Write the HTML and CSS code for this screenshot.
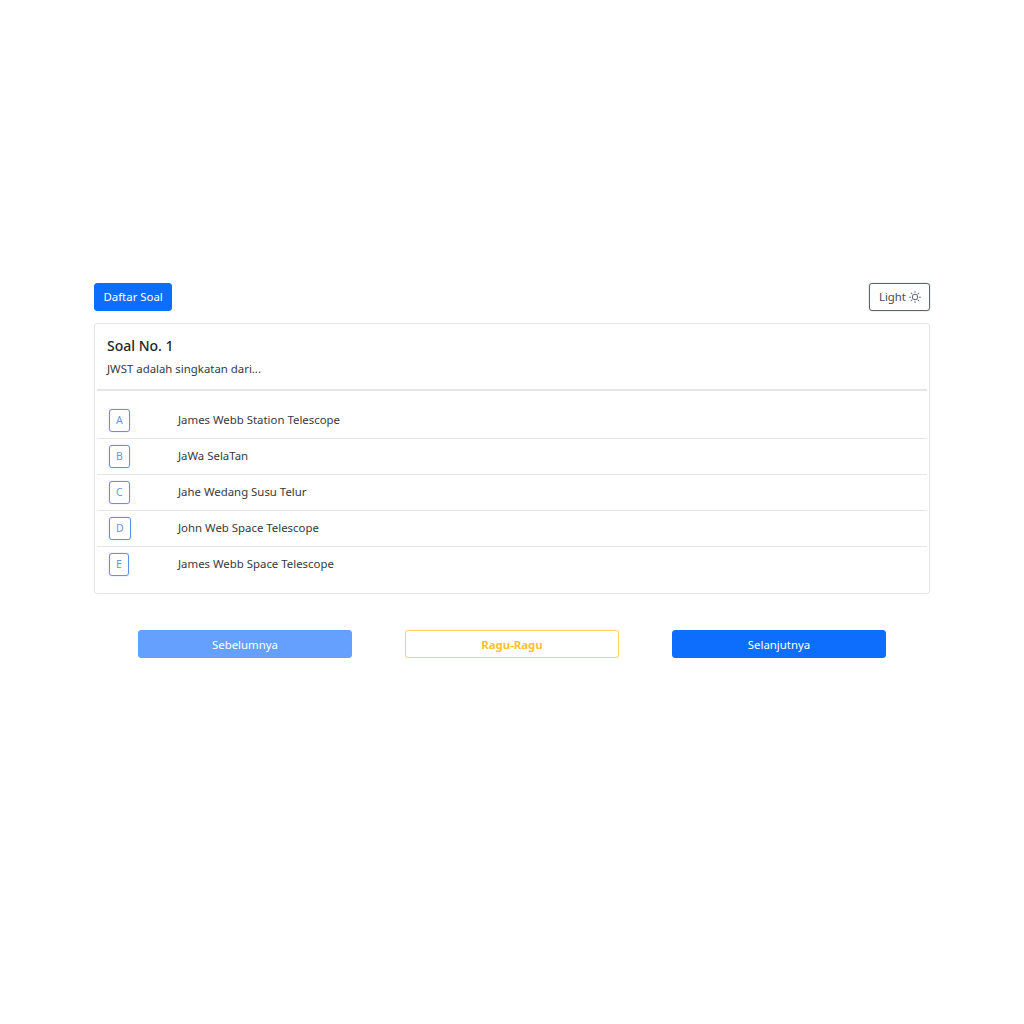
FILE: index.html
```html
<!DOCTYPE html>
<html lang="en">
<head>
<meta charset="UTF-8">
<meta name="viewport" content="width=device-width, initial-scale=1.0">
<title>Soal</title>
<link rel="stylesheet" href="styles.css">
</head>
<body>

<div class="container">
    <div class="top-bar">
        <button class="btn btn-primary">Daftar Soal</button>
        <button class="btn btn-theme">Light
            <svg class="sun" viewBox="0 0 16 16" width="12" height="12" fill="currentColor">
                <path d="M8 11a3 3 0 1 1 0-6 3 3 0 0 1 0 6zm0 1a4 4 0 1 0 0-8 4 4 0 0 0 0 8zM8 0a.5.5 0 0 1 .5.5v2a.5.5 0 0 1-1 0v-2A.5.5 0 0 1 8 0zm0 13a.5.5 0 0 1 .5.5v2a.5.5 0 0 1-1 0v-2A.5.5 0 0 1 8 13zm8-5a.5.5 0 0 1-.5.5h-2a.5.5 0 0 1 0-1h2a.5.5 0 0 1 .5.5zM3 8a.5.5 0 0 1-.5.5h-2a.5.5 0 0 1 0-1h2A.5.5 0 0 1 3 8zm10.657-5.657a.5.5 0 0 1 0 .707l-1.414 1.415a.5.5 0 1 1-.707-.708l1.414-1.414a.5.5 0 0 1 .707 0zm-9.193 9.193a.5.5 0 0 1 0 .707L3.05 13.657a.5.5 0 0 1-.707-.707l1.414-1.414a.5.5 0 0 1 .707 0zm9.193 2.121a.5.5 0 0 1-.707 0l-1.414-1.414a.5.5 0 0 1 .707-.707l1.414 1.414a.5.5 0 0 1 0 .707zM4.464 4.465a.5.5 0 0 1-.707 0L2.343 3.05a.5.5 0 1 1 .707-.707l1.414 1.414a.5.5 0 0 1 0 .708z"/>
            </svg>
        </button>
    </div>

    <div class="card">
        <div class="card-head">
            <h2>Soal No. 1</h2>
            <p>JWST adalah singkatan dari...</p>
        </div>
        <ul class="options">
            <li><span class="letter">A</span><span class="answer">James Webb Station Telescope</span></li>
            <li><span class="letter">B</span><span class="answer">JaWa SelaTan</span></li>
            <li><span class="letter">C</span><span class="answer">Jahe Wedang Susu Telur</span></li>
            <li><span class="letter">D</span><span class="answer">John Web Space Telescope</span></li>
            <li><span class="letter">E</span><span class="answer">James Webb Space Telescope</span></li>
        </ul>
    </div>

    <div class="bottom-bar">
        <button class="btn btn-primary btn-disabled">Sebelumnya</button>
        <button class="btn btn-warning">Ragu-Ragu</button>
        <button class="btn btn-primary">Selanjutnya</button>
    </div>
</div>

</body>
</html>
```

FILE: styles.css
```css
* {
    box-sizing: border-box;
}

body {
    font-family: "Noto Sans", "Open Sans", sans-serif;
    font-size: 11.4px;
    color: #212529;
    background-color: #fff;
    margin: 0;
    padding: 283px 94px 0;
}

.top-bar {
    display: flex;
    justify-content: space-between;
    margin-bottom: 12px;
}

.btn {
    font-family: inherit;
    font-size: 11.4px;
    line-height: 18px;
    height: 28px;
    padding: 0 8.5px;
    border: 1px solid transparent;
    border-radius: 3px;
    background: none;
}

.btn-primary {
    background-color: #0d6efd;
    border-color: #0d6efd;
    color: #fff;
}

.btn-disabled {
    background-color: #65a0fe;
    border-color: #65a0fe;
}

.btn-theme {
    display: flex;
    align-items: center;
    gap: 3px;
    padding: 0 8px 0 9px;
    border-color: #5c636a;
    box-shadow: 0 0 1px #5c636a;
    color: #444b52;
}

.btn-warning {
    border-color: #ffd466;
    box-shadow: 0 0 1px #ffd466;
    color: #ffc02e;
    font-weight: 700;
}

.bottom-bar .btn {
    padding-top: 2px;
}

.card {
    height: 271px;
    border: 1px solid #e3e5e7;
    border-radius: 3px;
    padding: 0 2px;
}

.card-head {
    height: 67px;
    padding: 12px 10px 0;
    border-bottom: 2px solid #e3e5e7;
}

.card-head h2 {
    margin: 0 0 4px;
    font-size: 14px;
    line-height: 20px;
    font-weight: 500;
}

.card-head p {
    margin: 0;
    line-height: 18px;
    color: #343a40;
}

.options {
    list-style: none;
    margin: 12px 0 0;
    padding: 0;
}

.options li {
    position: relative;
    display: flex;
    align-items: center;
    height: 36px;
    padding-left: 12px;
    border-bottom: 1px solid #e3e5e7;
}

.options li:last-child {
    border-bottom: none;
    height: 35px;
}

.letter {
    flex: none;
    height: 23px;
    padding: 0 6px;
    border: 1px solid #5b93ee;
    box-shadow: 0 0 1px #5b93ee;
    border-radius: 3px;
    font-size: 10.5px;
    line-height: 21px;
    text-align: center;
    color: #6c94d8;
}

.answer {
    position: absolute;
    left: 81px;
    margin-top: -2px;
    color: #343a40;
}

.bottom-bar {
    display: grid;
    grid-template-columns: repeat(3, 214px);
    justify-content: center;
    column-gap: 53px;
    margin-top: 36px;
}
```
